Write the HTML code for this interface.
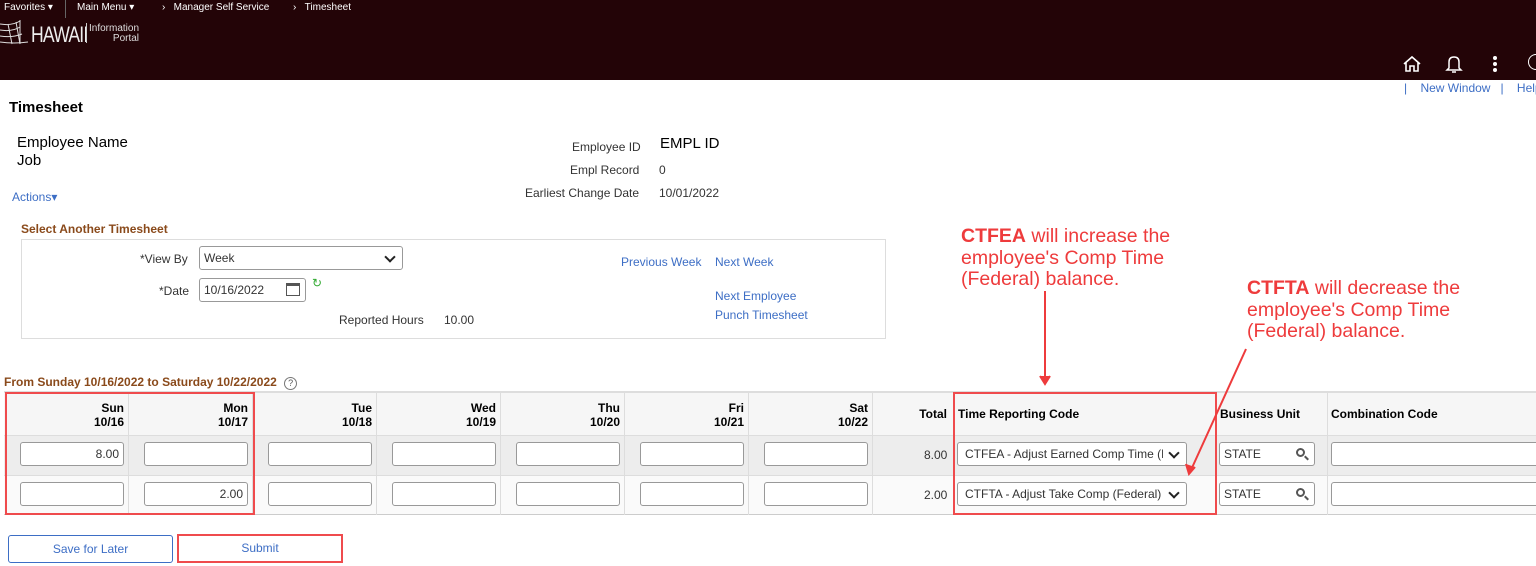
<!DOCTYPE html>
<html><head><style>
*{margin:0;padding:0;box-sizing:border-box}
body{width:1536px;height:566px;overflow:hidden;background:#fff;font-family:"Liberation Sans",sans-serif;position:relative;color:#333}
.a{position:absolute;white-space:nowrap}
.hd{position:absolute;left:0;top:0;width:1536px;height:80px;background:#230407}
.nav{color:#fff;font-size:10px;top:2px}
.lbl{font-size:12px;color:#333}
.lnk{color:#3d6ec5;font-size:12px}
.inp{position:absolute;height:24px;border:1px solid #999;border-radius:3px;background:#fff;font-size:12px;color:#333;padding:4px 4px;text-align:right}
.red{position:absolute;border:2px solid #ef4b4d}
.ann{color:#ee3b3c;font-size:19.5px;line-height:21.7px}
.th{position:absolute;font-size:12px;font-weight:bold;color:#000;text-align:right;line-height:14px}
.vl{position:absolute;top:392px;width:1px;height:123px;background:#ddd}
.chev{position:absolute;right:1px;top:1px;width:22px;height:20px;background:#fff}
.chev:after{content:"";position:absolute;left:7px;top:5px;width:6px;height:6px;border-right:2px solid #222;border-bottom:2px solid #222;transform:rotate(45deg)}
.mag{position:absolute;right:9px;top:5px;width:9px;height:9px;border:2px solid #555;border-radius:50%}
.mag:after{content:"";position:absolute;left:6px;top:7px;width:5px;height:2px;background:#555;transform:rotate(45deg)}
</style></head><body>
<div class="hd"></div>
<div class="a nav" style="left:4px">Favorites ▾</div>
<div class="a" style="left:65px;top:0;width:1px;height:18px;background:#666"></div>
<div class="a nav" style="left:77px">Main Menu ▾</div>
<div class="a nav" style="left:162px">›&nbsp;&nbsp;&nbsp;Manager Self Service</div>
<div class="a nav" style="left:293px">›&nbsp;&nbsp;&nbsp;Timesheet</div>
<svg class="a" style="left:0;top:20px" width="30" height="26" viewBox="0 0 30 26" fill="none" stroke="#ddd" stroke-width="1"><path d="M0 4 Q12 6 20 1 M0 10 Q12 12 20 7 M0 16 Q12 18 22 14 M0 22 Q14 24 28 22 M8 4 L12 24 M16 2 L20 24 M20 0 V24"/></svg>
<div class="a" style="left:31px;top:22px;font-size:22px;color:#eee;letter-spacing:-1px;transform:scaleX(0.8);transform-origin:left">HAWAII</div>
<div class="a" style="left:86px;top:23px;width:1px;height:20px;background:#ccc"></div>
<div class="a" style="left:89px;top:24px;font-size:10px;color:#ddd;line-height:10px;text-align:right">Information<br>Portal</div>
<svg class="a" style="left:1402px;top:55px" width="20" height="18" viewBox="0 0 20 18" fill="none" stroke="#fff" stroke-width="1.6"><path d="M2 9 L10 2 L18 9 M4 7 V16 H8 V11 H12 V16 H16 V7"/></svg>
<svg class="a" style="left:1445px;top:54px" width="18" height="20" viewBox="0 0 18 20" fill="none" stroke="#fff" stroke-width="1.5"><path d="M4 14 V8 Q4 3 9 3 Q14 3 14 8 V14 L16 16 H2 Z M7 18 H11"/></svg>
<div class="a" style="left:1493px;top:56px;width:4px;height:4px;border-radius:2px;background:#fff;box-shadow:0 6px 0 #fff,0 12px 0 #fff"></div>
<div class="a" style="left:1528px;top:54px;width:16px;height:16px;border:1.5px solid #fff;border-radius:50%"></div>
<div class="a" style="left:1404px;top:81px;font-size:12px;color:#3d6ec5">|&nbsp;&nbsp;&nbsp;&nbsp;New Window&nbsp;&nbsp;&nbsp;|&nbsp;&nbsp;&nbsp;&nbsp;Help</div>

<div class="a" style="left:9px;top:99px;font-size:15px;font-weight:bold;color:#000">Timesheet</div>
<div class="a" style="left:17px;top:134px;font-size:15px;color:#000;line-height:18px">Employee Name<br>Job</div>
<div class="a lnk" style="left:12px;top:190px">Actions▾</div>
<div class="a lbl" style="left:572px;top:140px">Employee ID</div>
<div class="a" style="left:660px;top:135px;font-size:15px;color:#000">EMPL ID</div>
<div class="a lbl" style="left:570px;top:163px">Empl Record</div>
<div class="a lbl" style="left:659px;top:163px">0</div>
<div class="a lbl" style="left:525px;top:186px">Earliest Change Date</div>
<div class="a lbl" style="left:659px;top:186px">10/01/2022</div>

<div class="a" style="left:21px;top:222px;font-size:12px;font-weight:bold;color:#8a4a1b">Select Another Timesheet</div>
<div class="a" style="left:21px;top:239px;width:865px;height:100px;border:1px solid #ddd"></div>
<div class="a lbl" style="left:140px;top:252px">*View By</div>
<div class="inp" style="left:199px;top:246px;width:204px;text-align:left;font-size:12px">Week<span class="chev"></span></div>
<div class="a lbl" style="left:159px;top:284px">*Date</div>
<div class="inp" style="left:199px;top:278px;width:107px;text-align:left">10/16/2022</div>
<div class="a" style="left:286px;top:283px;width:14px;height:13px;border:1.5px solid #555;border-top-width:3px"></div>
<div class="a" style="left:312px;top:276px;color:#3a3;font-size:12px">↻</div>
<div class="a lbl" style="left:339px;top:313px">Reported Hours</div>
<div class="a lbl" style="left:444px;top:313px">10.00</div>
<div class="a lnk" style="left:621px;top:255px">Previous Week</div>
<div class="a lnk" style="left:715px;top:255px">Next Week</div>
<div class="a lnk" style="left:715px;top:289px">Next Employee</div>
<div class="a lnk" style="left:715px;top:308px">Punch Timesheet</div>

<div class="a" style="left:4px;top:375px;font-size:12px;font-weight:bold;color:#8a4a1b">From Sunday 10/16/2022 to Saturday 10/22/2022 <span style="display:inline-block;width:13px;height:13px;border:1px solid #777;border-radius:50%;font-size:9px;text-align:center;line-height:11px;color:#555;margin-left:4px;font-weight:normal">?</span></div>

<div class="a" style="left:4px;top:391px;width:1532px;height:44px;background:#f6f6f6;border-top:2px solid #ddd"></div>
<div class="a" style="left:4px;top:435px;width:1532px;height:40px;background:#ededed;border-top:1px solid #ddd"></div>
<div class="a" style="left:4px;top:475px;width:1532px;height:40px;background:#fafafa;border-top:1px solid #ddd;border-bottom:1px solid #ccc"></div>
<div class="vl" style="left:128px"></div><div class="vl" style="left:252px"></div><div class="vl" style="left:376px"></div><div class="vl" style="left:500px"></div><div class="vl" style="left:624px"></div><div class="vl" style="left:748px"></div><div class="vl" style="left:872px"></div><div class="vl" style="left:1216px"></div><div class="vl" style="left:1327px"></div>

<div class="th" style="right:1412px;top:401px">Sun<br>10/16</div>
<div class="th" style="right:1288px;top:401px">Mon<br>10/17</div>
<div class="th" style="right:1164px;top:401px">Tue<br>10/18</div>
<div class="th" style="right:1040px;top:401px">Wed<br>10/19</div>
<div class="th" style="right:916px;top:401px">Thu<br>10/20</div>
<div class="th" style="right:792px;top:401px">Fri<br>10/21</div>
<div class="th" style="right:668px;top:401px">Sat<br>10/22</div>
<div class="th" style="right:589px;top:407px">Total</div>
<div class="th" style="left:958px;top:407px">Time Reporting Code</div>
<div class="th" style="left:1220px;top:407px">Business Unit</div>
<div class="th" style="left:1331px;top:407px">Combination Code</div>

<div class="inp" style="left:20px;top:442px;width:104px">8.00</div>
<div class="inp" style="left:144px;top:442px;width:104px"></div>
<div class="inp" style="left:268px;top:442px;width:104px"></div>
<div class="inp" style="left:392px;top:442px;width:104px"></div>
<div class="inp" style="left:516px;top:442px;width:104px"></div>
<div class="inp" style="left:640px;top:442px;width:104px"></div>
<div class="inp" style="left:764px;top:442px;width:104px"></div>
<div class="inp" style="left:20px;top:482px;width:104px"></div>
<div class="inp" style="left:144px;top:482px;width:104px">2.00</div>
<div class="inp" style="left:268px;top:482px;width:104px"></div>
<div class="inp" style="left:392px;top:482px;width:104px"></div>
<div class="inp" style="left:516px;top:482px;width:104px"></div>
<div class="inp" style="left:640px;top:482px;width:104px"></div>
<div class="inp" style="left:764px;top:482px;width:104px"></div>
<div class="a lbl" style="left:924px;top:448px">8.00</div>
<div class="a lbl" style="left:924px;top:488px">2.00</div>
<div class="inp" style="left:957px;top:442px;width:230px;text-align:left;overflow:hidden;padding-left:7px">CTFEA - Adjust Earned Comp Time (F<span class="chev"></span></div>
<div class="inp" style="left:957px;top:482px;width:230px;text-align:left;padding-left:7px">CTFTA - Adjust Take Comp (Federal)<span class="chev"></span></div>
<div class="inp" style="left:1219px;top:442px;width:96px;text-align:left">STATE<span class="mag"></span></div>
<div class="inp" style="left:1219px;top:482px;width:96px;text-align:left">STATE<span class="mag"></span></div>
<div class="inp" style="left:1331px;top:442px;width:220px"></div>
<div class="inp" style="left:1331px;top:482px;width:220px"></div>

<div class="red" style="left:5px;top:392px;width:250px;height:123px"></div>
<div class="red" style="left:953px;top:392px;width:264px;height:123px"></div>

<div class="a" style="left:8px;top:535px;width:165px;height:28px;border:1px solid #3d6ec5;border-radius:3px;color:#3d6ec5;font-size:12px;text-align:center;line-height:26px">Save for Later</div>
<div class="a" style="left:177px;top:534px;width:166px;height:29px;border:2px solid #ef4b4d;color:#3d6ec5;font-size:12px;text-align:center;line-height:25px">Submit</div>

<div class="a ann" style="left:961px;top:226px"><b>CTFEA</b> will increase the<br>employee's Comp Time<br>(Federal) balance.</div>
<div class="a ann" style="left:1247px;top:278px"><b>CTFTA</b> will decrease the<br>employee's Comp Time<br>(Federal) balance.</div>
<svg class="a" style="left:0;top:0" width="1536" height="566" fill="none" stroke="#ee3b3c" stroke-width="2"><path d="M1045 291 V380"/><path d="M1040 376 L1045 384 L1050 376" fill="#ee3b3c"/><path d="M1246 349 L1191 470"/><path d="M1186 464 L1189 474 L1195 467" fill="#ee3b3c"/></svg>
</body></html>
